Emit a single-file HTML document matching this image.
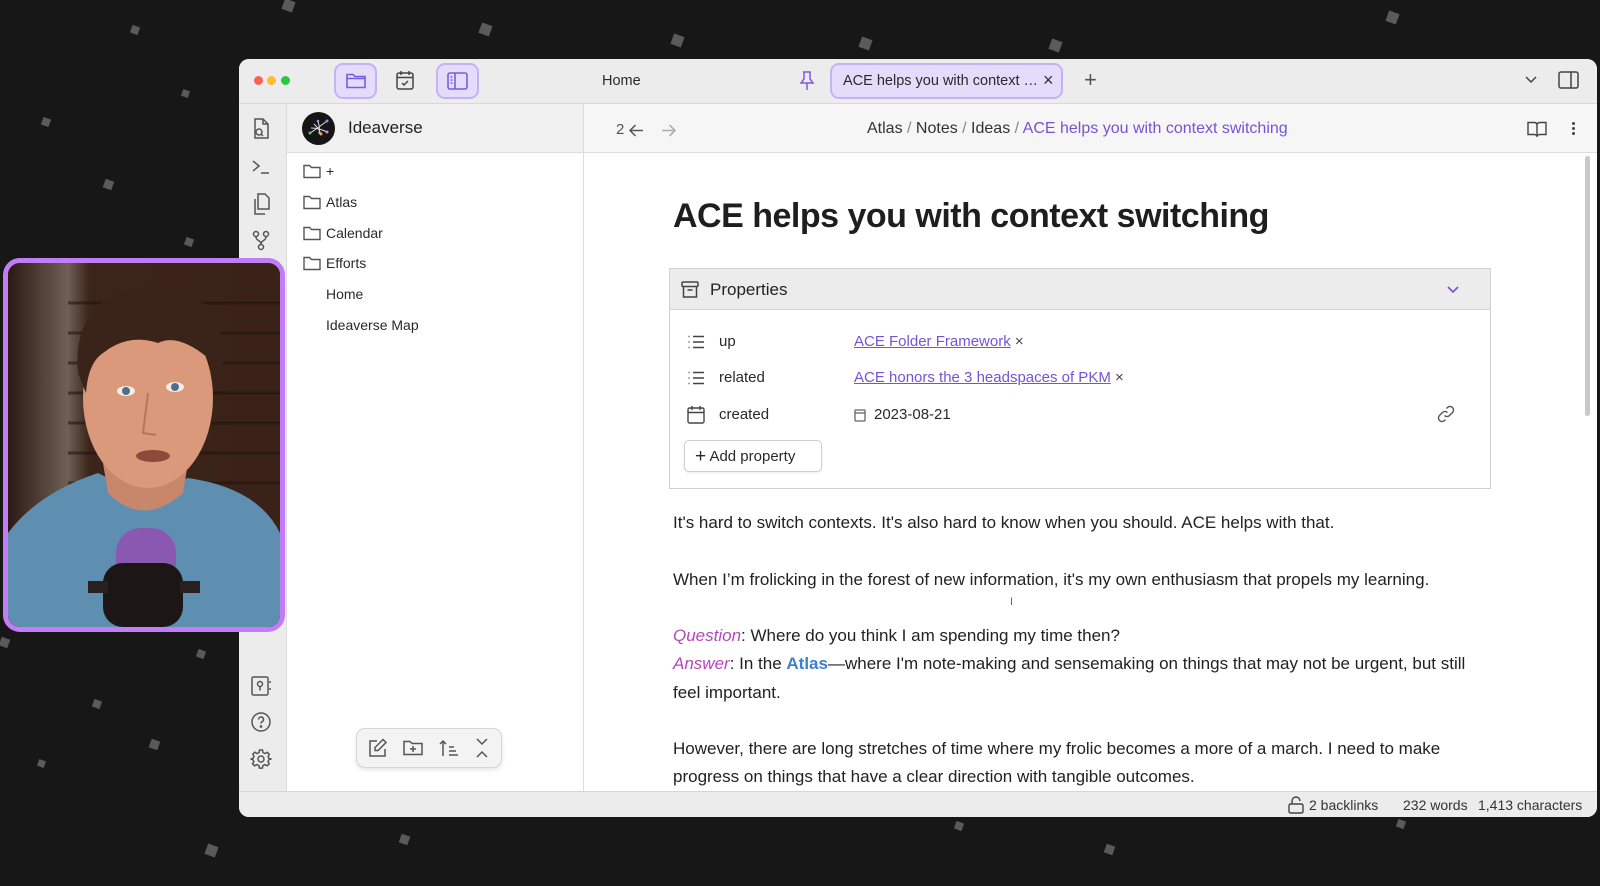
<!DOCTYPE html>
<html><head><meta charset="utf-8">
<style>
*{box-sizing:border-box;margin:0;padding:0}
body{width:1600px;height:886px;background:#171717;position:relative;overflow:hidden;font-family:"Liberation Sans",sans-serif;color:#222}
.sq{position:absolute;width:11px;height:11px;background:#5a5a5a;transform:rotate(20deg)}
.win{position:absolute;left:239px;top:59px;width:1358px;height:758px;background:#fff;border-radius:10px;overflow:hidden}
.abs{position:absolute}
.title{left:0;top:0;width:100%;height:45px;background:#ececec;border-bottom:1px solid #d8d8d8}
.ribbon{left:0;top:45px;width:48px;height:687px;background:#ececec;border-right:1px solid #dcdcdc}
.side{left:48px;top:45px;width:297px;height:687px;background:#fff;border-right:1px solid #dcdcdc}
.sidehead{left:0;top:0;width:100%;height:49px;background:#f0f0f0;border-bottom:1px solid #dcdcdc}
.mainhead{left:345px;top:45px;width:1013px;height:49px;background:#f6f6f6;border-bottom:1px solid #dcdcdc}
.status{left:0;top:732px;width:100%;height:26px;background:#ececec;border-top:1px solid #d6d6d6;font-size:14px;color:#333}
.btnp{background:#e3dcfb;border:2px solid #c2b3f5;border-radius:9px}
.item{position:absolute;font-size:14px;color:#2a2a2a;white-space:nowrap}
svg{overflow:visible}
.body{position:absolute;left:434px;font-size:17px;color:#222;white-space:nowrap;line-height:28px}
.lnk{color:#7454d6;text-decoration:underline}
</style></head><body>
<div class="sq" style="left:283px;top:0"></div><div class="sq" style="left:480px;top:24px"></div><div class="sq" style="left:1387px;top:12px"></div>
<div class="sq" style="left:131px;top:26px;width:8px;height:8px"></div><div class="sq" style="left:672px;top:35px"></div><div class="sq" style="left:860px;top:38px"></div><div class="sq" style="left:1050px;top:40px"></div>
<div class="sq" style="left:182px;top:90px;width:7px;height:7px"></div><div class="sq" style="left:42px;top:118px;width:8px;height:8px"></div><div class="sq" style="left:104px;top:180px;width:9px;height:9px"></div>
<div class="sq" style="left:185px;top:238px;width:8px;height:8px"></div><div class="sq" style="left:197px;top:650px;width:8px;height:8px"></div><div class="sq" style="left:93px;top:700px;width:8px;height:8px"></div>
<div class="sq" style="left:150px;top:740px;width:9px;height:9px"></div><div class="sq" style="left:206px;top:845px"></div><div class="sq" style="left:400px;top:835px;width:9px;height:9px"></div>
<div class="sq" style="left:955px;top:822px;width:8px;height:8px"></div><div class="sq" style="left:1105px;top:845px;width:9px;height:9px"></div><div class="sq" style="left:1397px;top:820px;width:8px;height:8px"></div><div class="sq" style="left:38px;top:760px;width:7px;height:7px"></div><div class="sq" style="left:0;top:638px;width:9px;height:9px"></div>

<div class="win">
 <div class="abs title">
  <div class="abs" style="left:15px;top:17px;width:9px;height:9px;border-radius:50%;background:#fe5f57"></div>
  <div class="abs" style="left:28px;top:17px;width:9px;height:9px;border-radius:50%;background:#febc2e"></div>
  <div class="abs" style="left:42px;top:17px;width:9px;height:9px;border-radius:50%;background:#28c840"></div>
  <div class="abs btnp" style="left:95px;top:4px;width:43px;height:36px"></div>
  <svg class="abs" style="left:107px;top:13px" width="20" height="17" viewBox="0 0 20 17" fill="none" stroke="#7b5ce0" stroke-width="1.6"><path d="M1 2.5h6l2 2h10v11H1z M1 6.5h18"/></svg>
  <svg class="abs" style="left:157px;top:11px" width="18" height="20" viewBox="0 0 18 20" fill="none" stroke="#444" stroke-width="1.5"><rect x="1" y="3" width="16" height="16" rx="2"/><path d="M1 7.5h16M5 1v4M13 1v4M6 13l2 2 4-4"/></svg>
  <div class="abs btnp" style="left:197px;top:4px;width:43px;height:36px"></div>
  <svg class="abs" style="left:208px;top:13px" width="21" height="18" viewBox="0 0 21 18" fill="none" stroke="#7b5ce0" stroke-width="1.6"><rect x="1" y="1" width="19" height="16" rx="2"/><path d="M8 1v16M3.5 5h2M3.5 8h2M3.5 11h2"/></svg>
  <div class="item" style="left:363px;top:14px;font-size:14.5px">Home</div>
  <svg class="abs" style="left:561px;top:12px" width="14" height="20" viewBox="0 0 14 20" fill="none" stroke="#7b5ce0" stroke-width="1.5"><path d="M3 1h8M4 1v7l-3 4h12l-3-4V1M7 12v7"/></svg>
  <div class="abs btnp" style="left:591px;top:4px;width:233px;height:36px"></div>
  <div class="item" style="left:604px;top:14px;font-size:14.5px">ACE helps you with context …</div>
  <div class="item" style="left:804px;top:11px;font-size:18px;color:#333">×</div>
  <div class="item" style="left:845px;top:8px;font-size:22px;color:#555">+</div>
  <svg class="abs" style="left:1286px;top:17px" width="12" height="8" viewBox="0 0 12 8" fill="none" stroke="#444" stroke-width="1.5"><path d="M1 1l5 5 5-5"/></svg>
  <svg class="abs" style="left:1319px;top:12px" width="21" height="18" viewBox="0 0 21 18" fill="none" stroke="#444" stroke-width="1.5"><rect x="1" y="1" width="19" height="16" rx="2"/><path d="M13 1v16"/></svg>
 </div>

 <div class="abs ribbon">
  <svg class="abs" style="left:12px;top:14px" width="20" height="22" viewBox="0 0 20 22" fill="none" stroke="#555" stroke-width="1.5"><path d="M4 1h8l5 5v14H4z M12 1v5h5"/><circle cx="8" cy="14" r="3"/><path d="M10 16l2 2"/></svg>
  <svg class="abs" style="left:12px;top:55px" width="20" height="16" viewBox="0 0 20 16" fill="none" stroke="#555" stroke-width="1.5"><path d="M2 2l6 5-6 5M10 14h8"/></svg>
  <svg class="abs" style="left:12px;top:89px" width="20" height="22" viewBox="0 0 20 22" fill="none" stroke="#555" stroke-width="1.5"><path d="M7 1h7l4 4v11H7z M4 6v15h10"/></svg>
  <svg class="abs" style="left:12px;top:126px" width="20" height="22" viewBox="0 0 20 22" fill="none" stroke="#555" stroke-width="1.5"><circle cx="5" cy="4" r="2.5"/><circle cx="15" cy="4" r="2.5"/><circle cx="10" cy="17" r="2.5"/><path d="M5 7c0 4 5 3 5 7M15 7c0 4-5 3-5 7"/></svg>
  <svg class="abs" style="left:12px;top:572px" width="20" height="20" viewBox="0 0 20 20" fill="none" stroke="#555" stroke-width="1.5"><rect x="1" y="1" width="16" height="18" rx="1.5"/><circle cx="9" cy="8" r="2.5"/><path d="M9 10.5v4M19 5v2M19 12v2"/></svg>
  <svg class="abs" style="left:12px;top:608px" width="20" height="20" viewBox="0 0 20 20" fill="none" stroke="#555" stroke-width="1.5"><circle cx="10" cy="10" r="9"/><path d="M7.5 7.5a2.5 2.5 0 1 1 3.5 2.3c-.8.4-1 1-1 1.7"/><circle cx="10" cy="14.5" r=".6" fill="#555"/></svg>
  <svg class="abs" style="left:12px;top:645px" width="20" height="20" viewBox="0 0 20 20" fill="none" stroke="#555" stroke-width="1.5"><circle cx="10" cy="10" r="3"/><path d="M8.5 1h3l.5 2.5 2 1 2.3-1.2 2 2-1.2 2.3 1 2L20.5 10v0l-2.5.5-1 2 1.2 2.3-2 2-2.3-1.2-2 1-.5 2.5h-3l-.5-2.5-2-1-2.3 1.2-2-2 1.2-2.3-1-2L-.5 10v0L2 9.5l1-2-1.2-2.3 2-2L6.1 4.5l2-1z"/></svg>
 </div>

 <div class="abs side">
  <div class="abs sidehead">
   <svg class="abs" style="left:15px;top:8px" width="33" height="33" viewBox="0 0 33 33"><circle cx="16.5" cy="16.5" r="16.5" fill="#151515"/><g stroke="#ddd" stroke-width="1" fill="none"><path d="M8 21c5-3 9-6 17-12M12 12c3 3 5 5 7 10M9 16c6 0 10 1 16 4M16 9c1 4 2 7 1 13"/></g><circle cx="25" cy="9" r="1.5" fill="#b679f0"/><circle cx="8" cy="21" r="1.5" fill="#5ec26b"/><circle cx="25" cy="20" r="1.5" fill="#e87fd4"/><circle cx="19" cy="22" r="1.5" fill="#f0a050"/><circle cx="16" cy="9" r="1.3" fill="#6aa8f0"/></svg>
   <div class="item" style="left:61px;top:14px;font-size:17px;color:#222">Ideaverse</div>
  </div>
  <svg class="abs" style="left:16px;top:60px" width="18" height="15" viewBox="0 0 18 15" fill="none" stroke="#555" stroke-width="1.4"><path d="M1 1.5h5.5l2 2H17v10H1z"/></svg><div class="item" style="left:39px;top:59px">+</div>
  <svg class="abs" style="left:16px;top:91px" width="18" height="15" viewBox="0 0 18 15" fill="none" stroke="#555" stroke-width="1.4"><path d="M1 1.5h5.5l2 2H17v10H1z"/></svg><div class="item" style="left:39px;top:90px">Atlas</div>
  <svg class="abs" style="left:16px;top:122px" width="18" height="15" viewBox="0 0 18 15" fill="none" stroke="#555" stroke-width="1.4"><path d="M1 1.5h5.5l2 2H17v10H1z"/></svg><div class="item" style="left:39px;top:121px">Calendar</div>
  <svg class="abs" style="left:16px;top:152px" width="18" height="15" viewBox="0 0 18 15" fill="none" stroke="#555" stroke-width="1.4"><path d="M1 1.5h5.5l2 2H17v10H1z"/></svg><div class="item" style="left:39px;top:151px">Efforts</div>
  <div class="item" style="left:39px;top:182px">Home</div>
  <div class="item" style="left:39px;top:213px">Ideaverse Map</div>
  <div class="abs" style="left:69px;top:624px;width:146px;height:40px;background:#f3f3f3;border:1px solid #d6d6d6;border-radius:9px;box-shadow:0 2px 5px rgba(0,0,0,.1)"></div>
  <svg class="abs" style="left:81px;top:634px" width="20" height="20" viewBox="0 0 20 20" fill="none" stroke="#555" stroke-width="1.5"><path d="M9 3H2v15h15v-7M15 1.5l3 3-8 8H7v-3z"/></svg>
  <svg class="abs" style="left:116px;top:636px" width="20" height="16" viewBox="0 0 20 16" fill="none" stroke="#555" stroke-width="1.5"><path d="M1 1.5h6l2 2h10v11H1zM10 6v6M7 9h6"/></svg>
  <svg class="abs" style="left:152px;top:635px" width="20" height="18" viewBox="0 0 20 18" fill="none" stroke="#555" stroke-width="1.5"><path d="M4 17V2M1 5l3-3 3 3M10 8h5M10 12h7M10 16h9"/></svg>
  <svg class="abs" style="left:189px;top:634px" width="12" height="20" viewBox="0 0 12 20" fill="none" stroke="#555" stroke-width="1.5"><path d="M1 1l5 5 5-5M1 19l5-5 5 5"/></svg>
 </div>

 <div class="abs mainhead">
  <div class="item" style="left:32px;top:17px;font-size:15px;color:#555">2</div>
  <svg class="abs" style="left:45px;top:20px" width="15" height="13" viewBox="0 0 15 13" fill="none" stroke="#555" stroke-width="1.5"><path d="M14 6.5H1M6.5 1L1 6.5 6.5 12"/></svg>
  <svg class="abs" style="left:77px;top:20px" width="15" height="13" viewBox="0 0 15 13" fill="none" stroke="#aaa" stroke-width="1.5"><path d="M1 6.5h13M8.5 1L14 6.5 8.5 12"/></svg>
  <div class="item" style="left:283px;top:16px;font-size:16px;color:#333">Atlas <span style="color:#888">/</span> Notes <span style="color:#888">/</span> Ideas <span style="color:#888">/</span> <span style="color:#7454d6">ACE helps you with context switching</span></div>
  <svg class="abs" style="left:943px;top:17px" width="20" height="16" viewBox="0 0 20 16" fill="none" stroke="#444" stroke-width="1.4"><path d="M1 1.5h6c2 0 3 1 3 2.5 0-1.5 1-2.5 3-2.5h6v12h-6c-2 0-3 1-3 2 0-1-1-2-3-2H1zM10 4v12"/></svg>
  <div class="abs" style="left:988px;top:18px;width:3px;height:3px;background:#444;border-radius:50%;box-shadow:0 5px #444,0 10px #444"></div>
 </div>
 <div class="abs" style="left:1346px;top:97px;width:5px;height:260px;background:#c9c9c9;border-radius:3px"></div>

 <div class="item" style="left:434px;top:138px;font-size:34px;font-weight:bold;color:#1e1e1e;letter-spacing:-0.5px">ACE helps you with context switching</div>

 <div class="abs" style="left:430px;top:209px;width:822px;height:221px;border:1px solid #d2d2d2">
  <div class="abs" style="left:0;top:0;width:100%;height:41px;background:#ececec;border-bottom:1px solid #d2d2d2"></div>
  <svg class="abs" style="left:11px;top:12px" width="18" height="17" viewBox="0 0 18 17" fill="none" stroke="#444" stroke-width="1.5"><rect x="1" y="1" width="16" height="4.5" rx="1"/><path d="M2.5 5.5V16h13V5.5M6.5 9h5"/></svg>
  <div class="item" style="left:40px;top:11px;font-size:17px;color:#222">Properties</div>
  <svg class="abs" style="left:777px;top:17px" width="12" height="8" viewBox="0 0 12 8" fill="none" stroke="#7454d6" stroke-width="1.6"><path d="M1 1l5 5 5-5"/></svg>
  <svg class="abs" style="left:17px;top:66px" width="18" height="14" viewBox="0 0 18 14" fill="none" stroke="#444" stroke-width="1.4"><path d="M6 1.5h11M6 7h11M6 12.5h11M1.5 1.5h1M1.5 7h1M1.5 12.5h1"/></svg>
  <div class="item" style="left:49px;top:64px;font-size:15px">up</div>
  <div class="item" style="left:184px;top:64px;font-size:15px"><span class="lnk">ACE Folder Framework</span> <span style="color:#444">×</span></div>
  <svg class="abs" style="left:17px;top:102px" width="18" height="14" viewBox="0 0 18 14" fill="none" stroke="#444" stroke-width="1.4"><path d="M6 1.5h11M6 7h11M6 12.5h11M1.5 1.5h1M1.5 7h1M1.5 12.5h1"/></svg>
  <div class="item" style="left:49px;top:100px;font-size:15px">related</div>
  <div class="item" style="left:184px;top:100px;font-size:15px"><span class="lnk">ACE honors the 3 headspaces of PKM</span> <span style="color:#444">×</span></div>
  <svg class="abs" style="left:17px;top:136px" width="18" height="19" viewBox="0 0 18 19" fill="none" stroke="#444" stroke-width="1.4"><rect x="1" y="3" width="16" height="15" rx="1.5"/><path d="M1 7.5h16M5 1v4M13 1v4"/></svg>
  <div class="item" style="left:49px;top:137px;font-size:15px">created</div>
  <svg class="abs" style="left:184px;top:139px" width="12" height="14" viewBox="0 0 12 14" fill="none" stroke="#666" stroke-width="1.3"><rect x="1" y="2" width="10" height="11" rx="1"/><path d="M1 5h10"/></svg>
  <div class="item" style="left:204px;top:137px;font-size:15px">2023-08-21</div>
  <svg class="abs" style="left:767px;top:136px" width="18" height="18" viewBox="0 0 18 18" fill="none" stroke="#555" stroke-width="1.4"><path d="M7.5 10.5a3.5 3.5 0 0 0 5 0l3-3a3.5 3.5 0 0 0-5-5l-1 1M10.5 7.5a3.5 3.5 0 0 0-5 0l-3 3a3.5 3.5 0 0 0 5 5l1-1"/></svg>
  <div class="abs" style="left:14px;top:171px;width:138px;height:32px;border:1px solid #cfcfcf;border-radius:5px;background:#fff;box-shadow:0 1px 2px rgba(0,0,0,.08)"></div>
  <div class="item" style="left:25px;top:176px;font-size:15px"><span style="font-size:19px;position:relative;top:1px">+</span> Add property</div>
 </div>

 <div class="body" style="top:450px">It's hard to switch contexts. It's also hard to know when you should. ACE helps with that.</div>
 <div class="body" style="top:507px">When I’m frolicking in the forest of new information, it's my own enthusiasm that propels my learning.</div>
 <div class="body" style="top:563px"><i style="color:#b548b8">Question</i>: Where do you think I am spending my time then?</div>
 <div class="body" style="top:591px"><i style="color:#b548b8">Answer</i>: In the <b style="color:#3d7fd0">Atlas</b>—where I'm note-making and sensemaking on things that may not be urgent, but still</div>
 <div class="body" style="top:620px">feel important.</div>
 <div class="body" style="top:676px">However, there are long stretches of time where my frolic becomes a more of a march. I need to make</div>
 <div class="body" style="top:704px">progress on things that have a clear direction with tangible outcomes.</div>
 <div class="item" style="left:771px;top:537px;font-size:11px;color:#666">I</div>

 <div class="abs status">
  <svg class="abs" style="left:1049px;top:4px" width="16" height="18" viewBox="0 0 16 18" fill="none" stroke="#444" stroke-width="1.4"><rect x="1" y="8" width="14" height="9" rx="1.5"/><path d="M4 8V5a4 4 0 0 1 8 0"/></svg>
  <div class="item" style="left:1070px;top:5px;font-size:14px;color:#333">2 backlinks</div>
  <div class="item" style="left:1164px;top:5px;font-size:14px;color:#333">232 words</div>
  <div class="item" style="left:1239px;top:5px;font-size:14px;color:#333">1,413 characters</div>
 </div>
</div>

<div class="abs" style="left:3px;top:258px;width:282px;height:374px;border:5px solid #c27cf5;border-radius:17px;overflow:hidden;background:#2b1d17">
<svg width="272" height="364" viewBox="0 0 272 364">
 <defs><linearGradient id="bg" x1="0" x2="1"><stop offset="0" stop-color="#2a1a14"/><stop offset=".22" stop-color="#6f5f55"/><stop offset=".3" stop-color="#3b2419"/><stop offset="1" stop-color="#3a2218"/></linearGradient></defs>
 <rect width="272" height="364" fill="url(#bg)"/>
 <g stroke="#22140e" stroke-width="3" opacity=".6"><path d="M60 40h212M60 70h212M60 100h212M60 130h212M60 160h212M60 190h212M60 220h212"/></g>
 <path d="M0 270 Q30 230 90 210 L130 230 L180 215 Q250 225 272 270 V364 H0z" fill="#5f8fb0"/>
 <path d="M95 200 L100 230 Q135 265 175 230 L180 200z" fill="#c8876a"/>
 <ellipse cx="140" cy="135" rx="65" ry="90" fill="#d9997a"/>
 <path d="M70 110 Q65 50 110 30 Q160 10 200 45 Q225 80 210 120 L200 95 Q170 70 150 80 Q120 70 95 90 Q80 100 78 130z" fill="#3a2318"/>
 <ellipse cx="118" cy="128" rx="9" ry="5" fill="#fff" opacity=".8"/><circle cx="118" cy="128" r="4" fill="#4e6f8c"/>
 <ellipse cx="167" cy="124" rx="9" ry="5" fill="#fff" opacity=".8"/><circle cx="167" cy="124" r="4" fill="#4e6f8c"/>
 <path d="M140 130 L135 170 L148 172" stroke="#b5765c" stroke-width="2" fill="none"/>
 <ellipse cx="145" cy="193" rx="17" ry="6" fill="#8d4a3c"/>
 <rect x="108" y="265" width="60" height="60" rx="25" fill="#8a58b0"/>
 <rect x="95" y="300" width="80" height="64" rx="20" fill="#1c1616"/>
 <rect x="80" y="318" width="20" height="12" fill="#2a2020"/><rect x="172" y="318" width="20" height="12" fill="#2a2020"/>
</svg>
</div>
</body></html>
